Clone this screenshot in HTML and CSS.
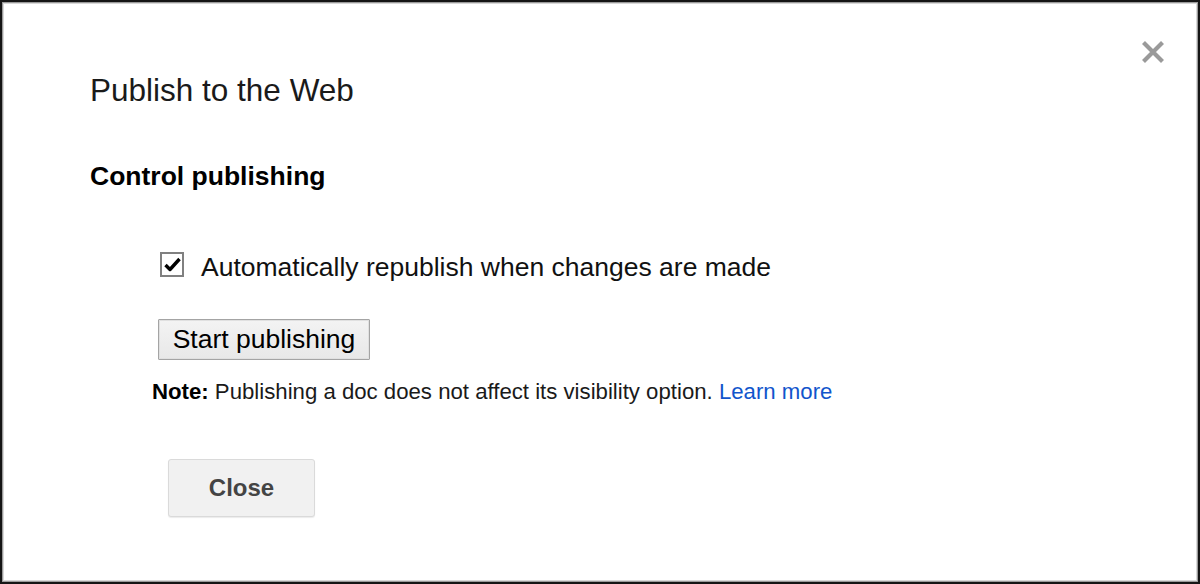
FILE: index.html
```html
<!DOCTYPE html>
<html>
<head>
<meta charset="utf-8">
<link rel="stylesheet" href="styles.css">
</head>
<body>
<div class="frame">
  <div class="dialog">
    <button class="close-x" aria-label="Close">
      <svg width="24" height="24" viewBox="0 0 24 24"><path d="M2.5 2.5 L21.5 21.5 M21.5 2.5 L2.5 21.5" stroke="#9a9a9a" stroke-width="4.2" stroke-linecap="butt"/></svg>
    </button>
    <h1 class="title">Publish to the Web</h1>
    <h2 class="section">Control publishing</h2>
    <div class="body">
      <label class="check-row">
        <span class="checkbox">
          <svg width="19" height="17" viewBox="0 0 19 17"><path d="M2.5 9 L7 13.5 L16.5 3" fill="none" stroke="#000" stroke-width="3.4" stroke-linejoin="round"/></svg>
        </span>
        <span class="check-label">Automatically republish when changes are made</span>
      </label>
      <button class="btn-start">Start publishing</button>
      <p class="note"><b>Note:</b> Publishing a doc does not affect its visibility option. <a href="#" class="link">Learn more</a></p>
      <button class="btn-close">Close</button>
    </div>
  </div>
</div>
</body>
</html>
```

FILE: styles.css
```css
html, body {
  margin: 0;
  padding: 0;
  background: #fff;
}
body {
  font-family: "Liberation Sans", Arial, sans-serif;
  color: #000;
}
.frame {
  width: 1200px;
  height: 584px;
  box-sizing: border-box;
  border: 2px solid #151515;
  box-shadow: inset 0 0 0 1px #9a9a9a, inset 0 0 0 2px #d8d8d8;
  background: #fff;
}
.dialog {
  position: relative;
  height: 100%;
  box-sizing: border-box;
  padding: 70px 0 0 88px;
}
.close-x {
  position: absolute;
  top: 37px;
  right: 32px;
  width: 26px;
  height: 26px;
  padding: 1px;
  border: 0;
  background: transparent;
  display: flex;
  align-items: center;
  justify-content: center;
}
.title {
  margin: 0;
  font-size: 31.5px;
  font-weight: normal;
  line-height: 36px;
  color: #1a1a1a;
}
.section {
  margin: 53px 0 0;
  font-size: 26.5px;
  font-weight: bold;
  line-height: 30px;
  color: #000;
}
.body {
  padding-left: 62px;
  display: flex;
  flex-direction: column;
  align-items: flex-start;
}
.check-row {
  margin: 61px 0 0 8px;
  display: flex;
  align-items: flex-start;
  gap: 17px;
}
.checkbox {
  width: 24px;
  height: 25px;
  border: 2px solid #808080;
  box-sizing: border-box;
  display: flex;
  align-items: center;
  justify-content: center;
  background: #fff;
}
.check-label {
  font-size: 26.5px;
  line-height: 30px;
  color: #111;
}
.btn-start {
  margin: 37px 0 0 6px;
  height: 41px;
  width: 212px;
  padding: 0;
  font-family: "Liberation Sans", Arial, sans-serif;
  font-size: 26.5px;
  line-height: 39px;
  color: #000;
  background: linear-gradient(#f3f3f3, #e8e8e8);
  border: 1px solid #a4a4a4;
  box-shadow: inset 0 0 0 1px #e0e0e0;
  border-radius: 1px;
}
.note {
  margin: 19px 0 0;
  font-size: 22.2px;
  line-height: 26px;
  color: #1a1a1a;
}
.note b {
  font-weight: bold;
  color: #000;
}
.link {
  color: #1155cc;
  text-decoration: none;
}
.btn-close {
  margin: 54px 0 0 16px;
  width: 147px;
  height: 58px;
  padding: 0;
  font-family: "Liberation Sans", Arial, sans-serif;
  font-size: 24px;
  font-weight: bold;
  color: #444;
  background: #f1f1f1;
  border: 1px solid #dadada;
  border-radius: 3px;
  box-shadow: 0 1px 1px rgba(0,0,0,0.08);
}
```
